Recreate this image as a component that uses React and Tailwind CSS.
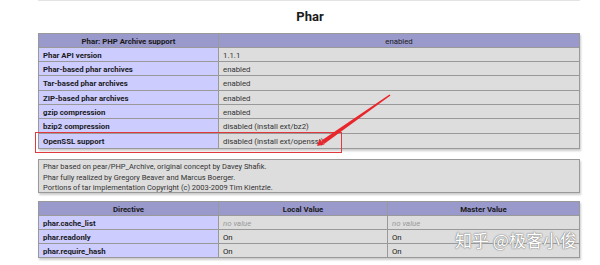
import React from "react";

const rows = [
  ["Phar API version", "1.1.1", "h-[14px]"],
  ["Phar-based phar archives", "enabled", "h-[14px]"],
  ["Tar-based phar archives", "enabled", "h-[15px]"],
  ["ZIP-based phar archives", "enabled", "h-[14px]"],
  ["gzip compression", "enabled", "h-[14px]"],
  ["bzip2 compression", "disabled (install ext/bz2)", "h-[15px]"],
  ["OpenSSL support", "disabled (install ext/openssl)", "h-[15px]"],
];

const directives = [
  ["phar.cache_list", null, null],
  ["phar.readonly", "On", "On"],
  ["phar.require_hash", "On", "On"],
];

const App = () => {
  return (
    <div
      className="relative w-[600px] h-[265px] bg-white overflow-hidden text-[#1a1a1a]"
      style={{ fontFamily: 'Roboto, "Noto Sans", sans-serif' }}
    >
      <div className="w-[542px] ml-[38px] border-t border-[#e4e4e4]" />

      {/* title */}
      <h1 className="text-center text-[13px] font-bold leading-[18px] mt-[7px] ml-[20px]">Phar</h1>

      {/* support table */}
      <div className="mt-[7px] ml-[38px] w-[542px] shadow-[1px_2px_2px_#ccc] text-[7.8px] leading-[11px]">
        <div className="grid grid-cols-[180px_1fr] bg-[#9999cc] border border-[#999] font-bold h-[15px]">
          <div className="text-center border-r border-[#999] pt-[2px]">Phar: PHP Archive support</div>
          <div className="text-center pt-[2px] font-normal">enabled</div>
        </div>
        {rows.map(([k, v, h]) => (
          <div key={k} className={`grid grid-cols-[180px_1fr] border-x border-b border-[#999] ${h}`}>
            <div className="bg-[#ccccff] font-bold px-[4px] border-r border-[#999] pt-[2px]">{k}</div>
            <div className="bg-[#dddddd] px-[4px] pt-[2px] text-[#333]">{v}</div>
          </div>
        ))}
      </div>

      {/* credits box */}
      <div className="mt-[10px] ml-[38px] w-[542px] h-[34px] bg-[#dddddd] border border-[#999] shadow-[1px_2px_2px_#ccc] px-[4px] pt-[2px] text-[7.5px] leading-[10.5px] text-[#333]">
        <div>Phar based on pear/PHP_Archive, original concept by Davey Shafik.</div>
        <div>Phar fully realized by Gregory Beaver and Marcus Boerger.</div>
        <div>Portions of tar implementation Copyright (c) 2003-2009 Tim Kientzle.</div>
      </div>

      {/* directive table */}
      <div className="mt-[8px] ml-[38px] w-[542px] shadow-[1px_2px_2px_#ccc] text-[7.8px] leading-[11px]">
        <div className="grid grid-cols-[180px_169px_1fr] bg-[#9999cc] border border-[#999] font-bold h-[15px]">
          <div className="text-center border-r border-[#999] pt-[2px]">Directive</div>
          <div className="text-center border-r border-[#999] pt-[2px]">Local Value</div>
          <div className="text-center pt-[2px]">Master Value</div>
        </div>
        {directives.map(([k, l, m]) => (
          <div key={k} className="grid grid-cols-[180px_169px_1fr] border-x border-b border-[#999] h-[14px]">
            <div className="bg-[#ccccff] font-bold px-[4px] border-r border-[#999] pt-[2px]">{k}</div>
            <div className="bg-[#dddddd] px-[4px] border-r border-[#999] pt-[2px]">
              {l ? l : <i className="text-[#999]">no value</i>}
            </div>
            <div className="bg-[#dddddd] px-[4px] pt-[2px]">
              {m ? m : <i className="text-[#999]">no value</i>}
            </div>
          </div>
        ))}
      </div>

      {/* red highlight box */}
      <div className="absolute left-[35px] top-[132px] w-[307px] h-[21px] border border-[#e0393e]" />

      {/* arrow */}
      <svg className="absolute left-0 top-0" width="600" height="265" viewBox="0 0 600 265">
        <polygon points="389.5,94.5 390.5,95.5 324,144 321.5,140.5" fill="#e8262b" />
        <polygon points="317,146 319.5,139 324.5,144.5" fill="#e8262b" />
      </svg>

      {/* watermark */}
      <div
        className="absolute left-[455px] top-[231px] text-[17px] leading-[18px] text-white whitespace-nowrap"
        style={{
          fontFamily: '"Noto Sans CJK SC", "Noto Sans", sans-serif',
          textShadow: "0 0 1px #777, 0 0 1px #888, 0 0 2px #aaa",
        }}
      >
        知乎 @极客小俊
      </div>
    </div>
  );
};

export default App;
